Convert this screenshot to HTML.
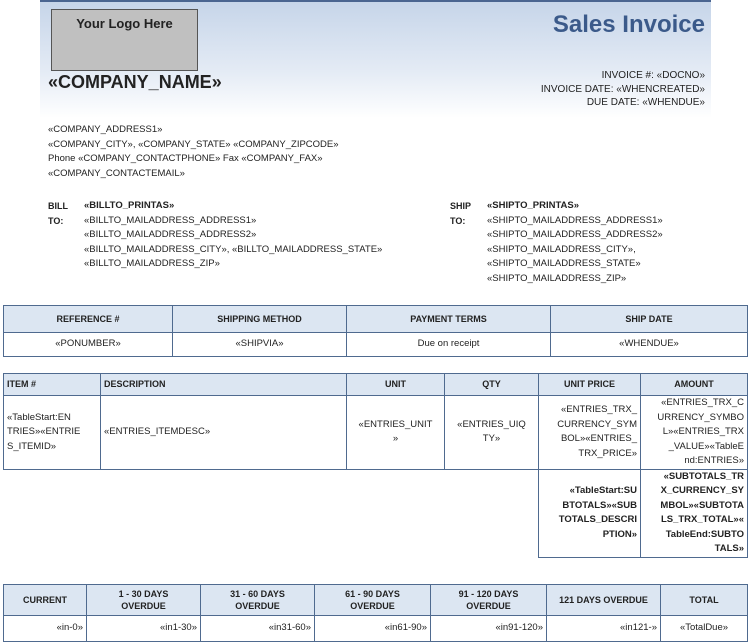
<!DOCTYPE html>
<html><head><style>
*{margin:0;padding:0;box-sizing:border-box}
body{width:751px;height:641px;overflow:hidden;background:#fff;font-family:"Liberation Sans",sans-serif;color:#222;position:relative}
.a{position:absolute;white-space:nowrap}
.hdr{position:absolute;left:40px;top:0;width:671px;height:118px;background:linear-gradient(#c6d5e9,#e4ebf5 60%,#fff);border-top:2px solid #4a6590}
.logo{position:absolute;left:51px;top:9px;width:147px;height:62px;background:#c0c0c0;border:1px solid #555;font:bold 13px "Liberation Sans",sans-serif;text-align:center;padding-top:6px}
.s{font-size:9.5px;line-height:14.5px}
table{position:absolute;border-collapse:collapse;font-size:9.5px}
td{border:1px solid #4f6a8f;text-align:center;vertical-align:middle;padding:0 3px;line-height:14.5px}
.h td{background:#dce6f2;font-weight:bold;font-size:9px}
</style></head><body>
<div class="hdr"></div>
<div class="logo">Your Logo Here</div>
<div class="a" style="right:46px;top:11px;font-size:24px;font-weight:bold;color:#3b5a8a">Sales Invoice</div>
<div class="a" style="left:48px;top:72px;font-size:18px;font-weight:bold">«COMPANY_NAME»</div>
<div class="a" style="right:46px;top:69px;font-size:10px;line-height:13.5px;text-align:right">INVOICE #: «DOCNO»<br>INVOICE DATE: «WHENCREATED»<br>DUE DATE: «WHENDUE»</div>
<div class="a s" style="left:48px;top:123px">«COMPANY_ADDRESS1»<br>«COMPANY_CITY», «COMPANY_STATE» «COMPANY_ZIPCODE»<br>Phone «COMPANY_CONTACTPHONE» Fax «COMPANY_FAX»<br>«COMPANY_CONTACTEMAIL»</div>
<div class="a s" style="left:48px;top:199px;font-weight:bold;font-size:9px">BILL<br>TO:</div>
<div class="a s" style="left:84px;top:199px"><b>«BILLTO_PRINTAS»</b><br>«BILLTO_MAILADDRESS_ADDRESS1»<br>«BILLTO_MAILADDRESS_ADDRESS2»<br>«BILLTO_MAILADDRESS_CITY», «BILLTO_MAILADDRESS_STATE»<br>«BILLTO_MAILADDRESS_ZIP»</div>
<div class="a s" style="left:450px;top:199px;font-weight:bold;font-size:9px">SHIP<br>TO:</div>
<div class="a s" style="left:487px;top:199px"><b>«SHIPTO_PRINTAS»</b><br>«SHIPTO_MAILADDRESS_ADDRESS1»<br>«SHIPTO_MAILADDRESS_ADDRESS2»<br>«SHIPTO_MAILADDRESS_CITY»,<br>«SHIPTO_MAILADDRESS_STATE»<br>«SHIPTO_MAILADDRESS_ZIP»</div>

<table style="left:3px;top:305px;width:745px">
<tr class="h" style="height:27px"><td style="width:169px">REFERENCE #</td><td style="width:174px">SHIPPING METHOD</td><td style="width:204px">PAYMENT TERMS</td><td>SHIP DATE</td></tr>
<tr style="height:24px"><td>«PONUMBER»</td><td>«SHIPVIA»</td><td>Due on receipt</td><td>«WHENDUE»</td></tr>
</table>

<table style="left:3px;top:373px;width:745px">
<tr class="h" style="height:22px"><td style="width:97px;text-align:left">ITEM #</td><td style="width:246px;text-align:left">DESCRIPTION</td><td style="width:98px">UNIT</td><td style="width:94px">QTY</td><td style="width:102px">UNIT PRICE</td><td>AMOUNT</td></tr>
<tr style="height:72px"><td style="text-align:left">«TableStart:EN<br>TRIES»«ENTRIE<br>S_ITEMID»</td><td style="text-align:left">«ENTRIES_ITEMDESC»</td><td>«ENTRIES_UNIT<br>»</td><td>«ENTRIES_UIQ<br>TY»</td><td style="text-align:right">«ENTRIES_TRX_<br>CURRENCY_SYM<br>BOL»«ENTRIES_<br>TRX_PRICE»</td><td style="text-align:right">«ENTRIES_TRX_C<br>URRENCY_SYMBO<br>L»«ENTRIES_TRX<br>_VALUE»«TableE<br>nd:ENTRIES»</td></tr>
<tr style="height:87px"><td colspan="4" style="border:none;border-top:1px solid #4f6a8f"></td><td style="text-align:right;font-weight:bold">«TableStart:SU<br>BTOTALS»«SUB<br>TOTALS_DESCRI<br>PTION»</td><td style="text-align:right;font-weight:bold">«SUBTOTALS_TR<br>X_CURRENCY_SY<br>MBOL»«SUBTOTA<br>LS_TRX_TOTAL»«<br>TableEnd:SUBTO<br>TALS»</td></tr>
</table>

<table style="left:3px;top:584px;width:745px">
<tr class="h" style="height:31px"><td style="width:83px;line-height:12px">CURRENT</td><td style="width:114px;line-height:12px">1 - 30 DAYS<br>OVERDUE</td><td style="width:114px;line-height:12px">31 - 60 DAYS<br>OVERDUE</td><td style="width:116px;line-height:12px">61 - 90 DAYS<br>OVERDUE</td><td style="width:116px;line-height:12px">91 - 120 DAYS<br>OVERDUE</td><td style="width:114px;line-height:12px">121 DAYS OVERDUE</td><td style="line-height:12px">TOTAL</td></tr>
<tr style="height:26px"><td style="text-align:right">«in-0»</td><td style="text-align:right">«in1-30»</td><td style="text-align:right">«in31-60»</td><td style="text-align:right">«in61-90»</td><td style="text-align:right">«in91-120»</td><td style="text-align:right">«in121-»</td><td>«TotalDue»</td></tr>
</table>
</body></html>
